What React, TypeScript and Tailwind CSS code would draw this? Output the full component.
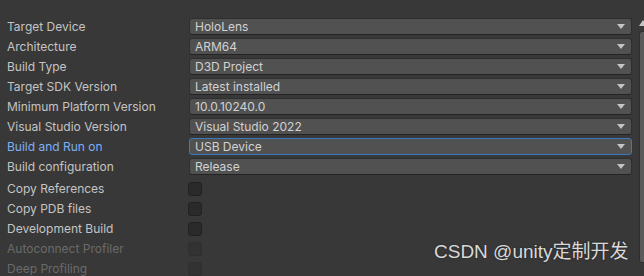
const dropdowns = [
  { label: "Target Device", value: "HoloLens" },
  { label: "Architecture", value: "ARM64" },
  { label: "Build Type", value: "D3D Project" },
  { label: "Target SDK Version", value: "Latest installed" },
  { label: "Minimum Platform Version", value: "10.0.10240.0" },
  { label: "Visual Studio Version", value: "Visual Studio 2022" },
  { label: "Build and Run on", value: "USB Device", focused: true },
  { label: "Build configuration", value: "Release" },
];

const toggles = [
  { label: "Copy References", disabled: false },
  { label: "Copy PDB files", disabled: false },
  { label: "Development Build", disabled: false },
  { label: "Autoconnect Profiler", disabled: true },
  { label: "Deep Profiling", disabled: true },
];

const Arrow = () => (
  <svg width="8" height="5" viewBox="0 0 8 5" className="shrink-0">
    <path d="M0 0 H8 L4 5 Z" fill="#c4c4c4" />
  </svg>
);

const App = () => {
  return (
    <div
      className="relative flex w-[644px] h-[276px] overflow-hidden bg-[#383838] text-[12px] text-[#c4c4c4]"
      style={{ fontFamily: "Inter, 'Noto Sans CJK SC', sans-serif" }}
    >
      <div className="flex-1 pt-[17px] pl-[7px] pr-[5px]">
        {dropdowns.map((row) => (
          <div key={row.label} className="flex h-5 items-start">
            <div
              className={`w-[182px] h-5 leading-5 ${
                row.focused ? "text-[#7eaef5]" : "text-[#c4c4c4]"
              }`}
            >
              {row.label}
            </div>
            <div
              className={`mt-[1px] flex h-[17px] flex-1 items-center justify-between rounded-[3px] border bg-[#515151] pl-[5px] pr-[6px] text-[#d2d2d2] ${
                row.focused
                  ? "border-[#3a79bb]"
                  : "border-[#2f2f2f] border-b-[#242424]"
              }`}
            >
              <span className="leading-none">{row.value}</span>
              <Arrow />
            </div>
          </div>
        ))}
        <div className="mt-[2px]">
          {toggles.map((row) => (
            <div key={row.label} className="flex h-5 items-center">
              <div
                className={`w-[181px] ${
                  row.disabled ? "text-[#6a6a6a]" : "text-[#c4c4c4]"
                }`}
              >
                {row.label}
              </div>
              <div
                className={`h-[14px] w-[14px] rounded-[3px] border ${
                  row.disabled
                    ? "border-[#2f2f2f] bg-[#323232]"
                    : "border-[#212121] bg-[#2a2a2a]"
                }`}
              />
            </div>
          ))}
        </div>
      </div>
      <div className="relative w-[7px] shrink-0">
        <svg
          width="7"
          height="6"
          viewBox="0 0 7 6"
          className="absolute left-[2px] top-[20px]"
        >
          <path d="M4 0 L8 6 H0 Z" fill="#c4c4c4" />
        </svg>
        <div className="absolute left-[2px] top-[31px] h-[232px] w-[8px] rounded-l-[3px] border border-[#2e2e2e] bg-[#5a5a5a]" />
      </div>
      <div
        className="absolute left-[434px] top-[238px] text-[19px] text-[#d9d9d9] [text-shadow:0_0_2px_#222]"
        style={{ fontFamily: "'Liberation Sans', 'Noto Sans CJK SC', sans-serif" }}
      >
        CSDN @unity定制开发
      </div>
    </div>
  );
};

export default App;
